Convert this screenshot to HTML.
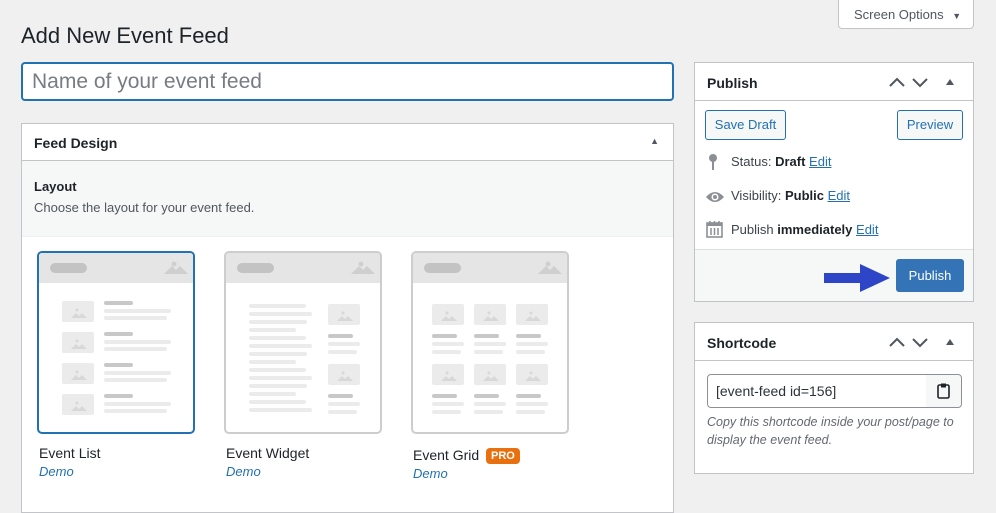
<!DOCTYPE html>
<html><head><meta charset="utf-8"><style>
*{box-sizing:border-box;margin:0;padding:0}
body{width:996px;height:502px;background:#f0f0f1;font-family:"Liberation Sans",sans-serif;font-size:13px;color:#1d2327;position:relative;overflow:hidden}
.a{position:absolute}
.box{position:absolute;background:#fff;border:1px solid #c3c4c7}
.hd{position:absolute;left:0;right:0;top:0;height:38px;border-bottom:1px solid #c3c4c7;font-weight:bold;font-size:14px;padding:12px 12px}
a{color:#2271b1;text-decoration:underline}
.btn{position:absolute;border:1px solid #2271b1;color:#2271b1;background:#f6f7f7;border-radius:3px;font-size:13px;text-align:center;line-height:28px}
.ctl{position:absolute;top:10px;width:80px;right:4px;height:18px}
.lbl{font-size:14px;color:#1d2327}
.demo{font-style:italic;color:#2271b1;font-size:13px}
</style></head><body>
<div class="a" style="left:838px;top:-1px;width:136px;height:30px;background:#fff;border:1px solid #c3c4c7;border-radius:0 0 4px 4px;color:#50575e;font-size:13px;line-height:30px;padding-left:15px">Screen Options <span style="font-size:9px;margin-left:5px">▼</span></div>
<div class="a" style="left:21px;top:23px;font-size:22px;color:#1d2327">Add New Event Feed</div>
<div class="a" style="left:21px;top:62px;width:653px;height:39px;border:2px solid #2271b1;border-radius:4px;background:#fff;font-size:21px;color:#787c82;padding:6px 9px;line-height:24px">Name of your event feed</div>

<div class="box" style="left:21px;top:123px;width:653px;height:390px">
 <div class="hd" style="height:37px;padding-top:11px">Feed Design <span style="position:absolute;right:14px;top:12px;font-size:9px;color:#50575e">▲</span></div>
 <div class="a" style="left:0;right:0;top:37px;height:76px;background:#f6f7f7;border-bottom:1px solid #f0f0f1;padding:18px 12px">
  <div style="font-weight:bold;font-size:13px">Layout</div>
  <div style="margin-top:6px;color:#50575e">Choose the layout for your event feed.</div>
 </div>
</div>

<svg class="a" style="left:37px;top:251px" width="158" height="183" viewBox="0 0 158 183">
<rect x="1" y="1" width="156" height="181" rx="4" fill="#fff" stroke="#2271b1" stroke-width="2"/>
<path d="M2 5a3 3 0 0 1 3-3h148a3 3 0 0 1 3 3v27H2z" fill="#e5e5e5"/>
<rect x="13" y="12" width="37" height="10" rx="5" fill="#c3c3c3"/>
<circle cx="137" cy="13" r="2.5" fill="#cfcfcf"/><path d="M127 23l8-8 4 4 4-4 8 8z" fill="#cfcfcf"/>
<g id="lr">
<rect x="25" y="50" width="32" height="21" rx="2" fill="#ebebeb"/><path d="M34 67l5-5 3 3 3-3 5 5z" fill="#d8d8d8"/><circle cx="40" cy="59" r="1.5" fill="#d8d8d8"/>
<rect x="67" y="50" width="29" height="4" rx="2" fill="#c8c8c8"/><rect x="67" y="58" width="67" height="4" rx="2" fill="#ebebeb"/><rect x="67" y="65" width="63" height="4" rx="2" fill="#ebebeb"/>
</g>
<use href="#lr" y="31"/><use href="#lr" y="62"/><use href="#lr" y="93"/>
</svg>

<svg class="a" style="left:224px;top:251px" width="158" height="183" viewBox="0 0 158 183">
<rect x="1" y="1" width="156" height="181" rx="4" fill="#fff" stroke="#cdcdcd" stroke-width="2"/>
<path d="M2 5a3 3 0 0 1 3-3h148a3 3 0 0 1 3 3v27H2z" fill="#e5e5e5"/>
<rect x="13" y="12" width="37" height="10" rx="5" fill="#c3c3c3"/>
<circle cx="137" cy="13" r="2.5" fill="#cfcfcf"/><path d="M127 23l8-8 4 4 4-4 8 8z" fill="#cfcfcf"/>
<g fill="#ebebeb">
<rect x="25" y="53" width="57" height="4" rx="2"/><rect x="25" y="61" width="63" height="4" rx="2"/><rect x="25" y="69" width="58" height="4" rx="2"/><rect x="25" y="77" width="47" height="4" rx="2"/><rect x="25" y="85" width="57" height="4" rx="2"/><rect x="25" y="93" width="63" height="4" rx="2"/><rect x="25" y="101" width="58" height="4" rx="2"/><rect x="25" y="109" width="47" height="4" rx="2"/><rect x="25" y="117" width="57" height="4" rx="2"/><rect x="25" y="125" width="63" height="4" rx="2"/><rect x="25" y="133" width="58" height="4" rx="2"/><rect x="25" y="141" width="47" height="4" rx="2"/><rect x="25" y="149" width="57" height="4" rx="2"/><rect x="25" y="157" width="63" height="4" rx="2"/>
</g>
<g id="wt"><rect x="104" y="53" width="32" height="21" rx="2" fill="#ebebeb"/><path d="M113 70l5-5 3 3 3-3 5 5z" fill="#d8d8d8"/><circle cx="119" cy="62" r="1.5" fill="#d8d8d8"/>
<rect x="104" y="83" width="25" height="4" rx="2" fill="#c8c8c8"/><rect x="104" y="91" width="32" height="4" rx="2" fill="#ebebeb"/><rect x="104" y="99" width="29" height="4" rx="2" fill="#ebebeb"/></g>
<use href="#wt" y="60"/>
</svg>

<svg class="a" style="left:411px;top:251px" width="158" height="183" viewBox="0 0 158 183">
<rect x="1" y="1" width="156" height="181" rx="4" fill="#fff" stroke="#cdcdcd" stroke-width="2"/>
<path d="M2 5a3 3 0 0 1 3-3h148a3 3 0 0 1 3 3v27H2z" fill="#e5e5e5"/>
<rect x="13" y="12" width="37" height="10" rx="5" fill="#c3c3c3"/>
<circle cx="137" cy="13" r="2.5" fill="#cfcfcf"/><path d="M127 23l8-8 4 4 4-4 8 8z" fill="#cfcfcf"/>
<g id="gt"><rect x="21" y="53" width="32" height="21" rx="2" fill="#ebebeb"/><path d="M30 70l5-5 3 3 3-3 5 5z" fill="#d8d8d8"/><circle cx="36" cy="62" r="1.5" fill="#d8d8d8"/>
<rect x="21" y="83" width="25" height="4" rx="2" fill="#c8c8c8"/><rect x="21" y="91" width="32" height="4" rx="2" fill="#ebebeb"/><rect x="21" y="99" width="29" height="4" rx="2" fill="#ebebeb"/></g>
<use href="#gt" x="42"/><use href="#gt" x="84"/><use href="#gt" y="60"/><use href="#gt" x="42" y="60"/><use href="#gt" x="84" y="60"/>
</svg>

<div class="a lbl" style="left:39px;top:445px">Event List</div>
<div class="a demo" style="left:39px;top:464px">Demo</div>
<div class="a lbl" style="left:226px;top:445px">Event Widget</div>
<div class="a demo" style="left:226px;top:464px">Demo</div>
<div class="a lbl" style="left:413px;top:447px">Event Grid <span style="display:inline-block;background:#e8700f;color:#fff;font-size:11px;font-weight:bold;border-radius:4px;padding:2px 5px;margin-left:3px;vertical-align:1px">PRO</span></div>
<div class="a demo" style="left:413px;top:466px">Demo</div>

<div class="box" style="left:694px;top:62px;width:280px;height:240px">
 <div class="hd">Publish
  <svg class="ctl" viewBox="0 0 80 18"><path d="M1 13l7-7 7 7M24 6l7 7 7-7" fill="none" stroke="#50575e" stroke-width="2"/><path d="M57 12l4-6 4 6z" fill="#50575e"/></svg>
 </div>
 <div class="btn" style="left:10px;top:47px;width:81px;height:30px">Save Draft</div>
 <div class="btn" style="left:202px;top:47px;width:66px;height:30px">Preview</div>
 <svg class="a" style="left:13px;top:90px" width="10" height="20" viewBox="0 0 10 20"><circle cx="5" cy="5" r="4" fill="#8c8f94"/><rect x="4" y="7" width="2" height="10" fill="#8c8f94"/></svg>
 <div class="a" style="left:36px;top:91px;color:#3c434a">Status: <b style="color:#1d2327">Draft</b> <a>Edit</a></div>
 <svg class="a" style="left:10px;top:127px" width="20" height="14" viewBox="0 0 20 14"><path d="M1 7Q10-3 19 7Q10 17 1 7z" fill="#8c8f94"/><circle cx="10" cy="7" r="3.5" fill="#fff"/><circle cx="10" cy="7" r="2" fill="#8c8f94"/></svg>
 <div class="a" style="left:36px;top:125px;color:#3c434a">Visibility: <b style="color:#1d2327">Public</b> <a>Edit</a></div>
 <svg class="a" style="left:11px;top:157px" width="17" height="18" viewBox="0 0 17 18"><rect x="1" y="3" width="15" height="14" fill="none" stroke="#8c8f94" stroke-width="1.6"/><rect x="1" y="3" width="15" height="3" fill="#8c8f94"/><path d="M4 1v4M8.5 1v4M13 1v4M5 8v7M8.5 8v7M12 8v7" stroke="#8c8f94" stroke-width="1.5"/></svg>
 <div class="a" style="left:36px;top:159px;color:#3c434a">Publish <b style="color:#1d2327">immediately</b> <a>Edit</a></div>
 <div class="a" style="left:0;right:0;top:186px;bottom:0;background:#f6f7f7;border-top:1px solid #dcdcde"></div>
 <svg class="a" style="left:128px;top:200px" width="68" height="30" viewBox="0 0 68 30"><path d="M1 10h36V1l30 14-30 14v-9H1z" fill="#2e45c7"/></svg>
 <div class="a" style="left:201px;top:196px;width:68px;height:33px;background:#3474b6;border-radius:3px;color:#fff;text-align:center;line-height:33px;font-size:13px">Publish</div>
</div>

<div class="box" style="left:694px;top:322px;width:280px;height:152px">
 <div class="hd">Shortcode
  <svg class="ctl" viewBox="0 0 80 18"><path d="M1 13l7-7 7 7M24 6l7 7 7-7" fill="none" stroke="#50575e" stroke-width="2"/><path d="M57 12l4-6 4 6z" fill="#50575e"/></svg>
 </div>
 <div class="a" style="left:12px;top:51px;width:255px;height:34px;border:1px solid #8c8f94;border-radius:4px;background:#fff;padding:0 8px;line-height:32px;font-size:14px;color:#2c3338">[event-feed id=156]
  <div class="a" style="right:0;top:0;width:35px;height:32px;background:#f6f7f7;border-radius:0 4px 4px 0"><svg style="position:absolute;left:11px;top:8px" width="13" height="16" viewBox="0 0 13 16"><rect x="1" y="2" width="11" height="13" rx="1.5" fill="none" stroke="#1d2327" stroke-width="1.6"/><rect x="4" y="0.5" width="5" height="4" fill="#1d2327"/></svg></div>
 </div>
 <div class="a" style="left:12px;top:90px;width:260px;font-style:italic;color:#646970;font-size:12.5px;line-height:18px">Copy this shortcode inside your post/page to display the event feed.</div>
</div>
</body></html>
